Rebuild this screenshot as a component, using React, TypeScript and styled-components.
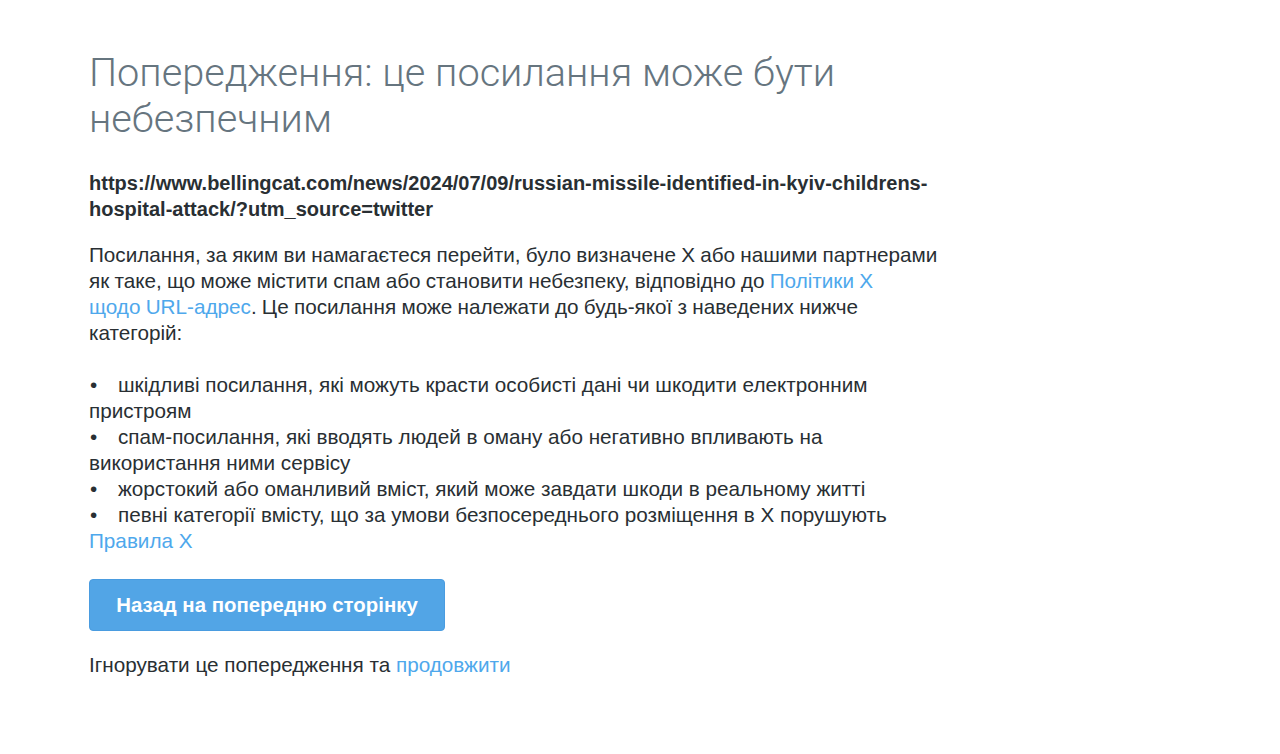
import React from "react";
import styled, { createGlobalStyle } from "styled-components";

const Global = createGlobalStyle`
  html, body { margin: 0; padding: 0; background: #ffffff; }
  body { font-family: "Liberation Sans", Arial, sans-serif; color: #292f33; }
`;

const Page = styled.main`
  padding: 50px 0 40px 89px;
  max-width: 851px;
`;

const Title = styled.h1`
  margin: 0 0 28px;
  font-family: Roboto, "Liberation Sans", sans-serif;
  font-weight: 300;
  font-size: 39.7px;
  line-height: 46px;
  color: #66757f;
`;

const Url = styled.p`
  margin: 0 0 20px;
  font-size: 20px;
  line-height: 26px;
  font-weight: 700;
  color: #292f33;
  word-break: break-word;
`;

const Text = styled.p<{ $tight?: boolean }>`
  margin: 0 0 26px;
  font-size: 20.7px;
  line-height: 26px;
  word-spacing: ${(p) => (p.$tight ? "-0.5px" : "normal")};
`;

const Link = styled.a`
  color: #4ea8ec;
  text-decoration: none;
`;

const NoWrap = styled.span`
  white-space: nowrap;
`;

const List = styled.ul`
  margin: 0 0 25px;
  padding: 0;
  list-style: none;
`;

const Item = styled.li`
  font-size: 20.7px;
  line-height: 26px;
`;

const Bullet = styled.span`
  display: inline-block;
  width: 28px;
  padding-left: 1px;
`;

const Button = styled.button`
  display: block;
  width: 356px;
  height: 52px;
  margin: 0 0 21px;
  border: 1px solid #4a9ce0;
  border-radius: 4px;
  background: #52a5e6;
  color: #ffffff;
  font-family: "Liberation Sans", Arial, sans-serif;
  font-weight: 700;
  font-size: 20.4px;
  cursor: pointer;
`;

const items: React.ReactNode[] = [
  "шкідливі посилання, які можуть красти особисті дані чи шкодити електронним пристроям",
  "спам-посилання, які вводять людей в оману або негативно впливають на використання ними сервісу",
  "жорстокий або оманливий вміст, який може завдати шкоди в реальному житті",
  <>
    певні категорії вмісту, що за умови безпосереднього розміщення в X порушують{" "}
    <Link href="#">Правила X</Link>
  </>,
];

export default function App() {
  return (
    <>
      <Global />
      <Page>
        <Title>Попередження: це посилання може бути небезпечним</Title>
        <Url>
          https://www.bellingcat.com/news/2024/07/09/russian-missile-identified-in-kyiv-childrens-hospital-attack/?utm_source=twitter
        </Url>
        <Text $tight>
          Посилання, за яким ви намагаєтеся перейти, було визначене X або нашими партнерами як таке, що
          може містити спам або становити небезпеку, відповідно до{" "}
          <Link href="#">
            Політики X <NoWrap>щодо URL-адрес</NoWrap>
          </Link>
          . Це посилання може належати до будь-якої з наведених нижче категорій:
        </Text>
        <List>
          {items.map((it, i) => (
            <Item key={i}>
              <Bullet>•</Bullet>
              {it}
            </Item>
          ))}
        </List>
        <Button type="button">Назад на попередню сторінку</Button>
        <Text>
          Ігнорувати це попередження та <Link href="#">продовжити</Link>
        </Text>
      </Page>
    </>
  );
}
